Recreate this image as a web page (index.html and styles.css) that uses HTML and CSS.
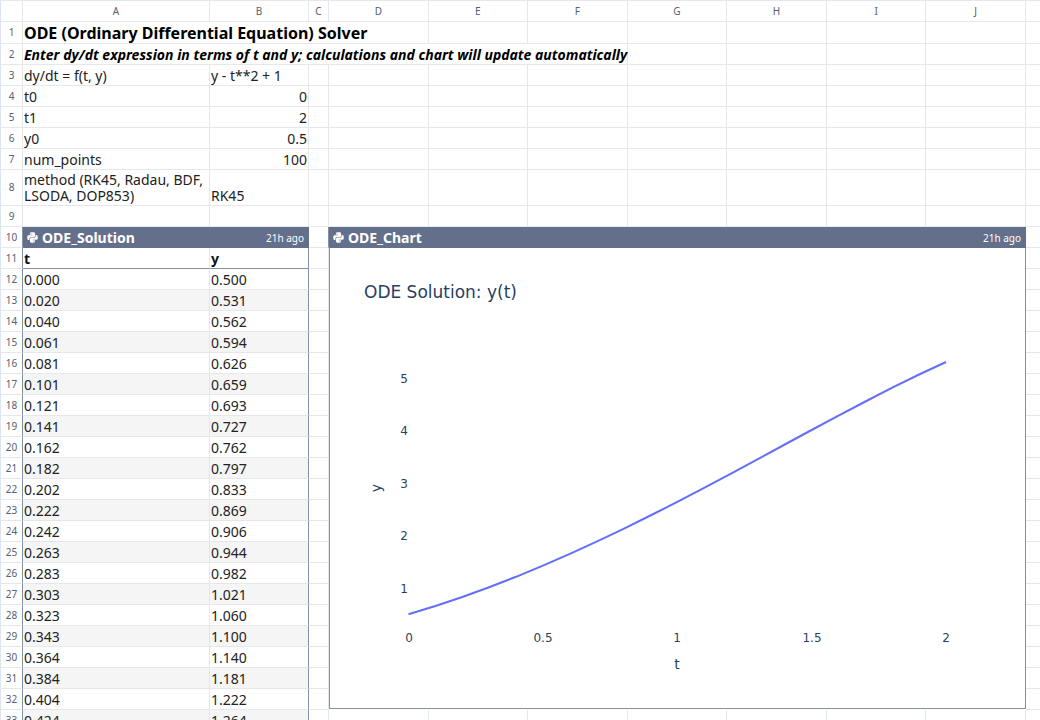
FILE: index.html
```html
<!DOCTYPE html>
<html lang="en">
<head>
<meta charset="utf-8">
<title>ODE (Ordinary Differential Equation) Solver</title>
<link rel="stylesheet" href="styles.css">
</head>
<body>
<svg class="sprite" aria-hidden="true">
  <symbol id="python" viewBox="2 2 20 21">
    <path d="M19.14,7.5A2.86,2.86 0 0,1 22,10.36V14.14A2.86,2.86 0 0,1 19.14,17H12C12,17.39 12.32,17.96 12.71,17.96H17V19.64A2.86,2.86 0 0,1 14.14,22.5H9.86A2.86,2.86 0 0,1 7,19.64V15.89C7,14.31 8.28,13.04 9.86,13.04H15.11C16.69,13.04 17.96,11.76 17.96,10.18V7.5H19.14M14.86,19.29C14.46,19.29 14.14,19.59 14.14,20.18C14.14,20.77 14.46,20.89 14.86,20.89A0.71,0.71 0 0,0 15.57,20.18C15.57,19.59 15.25,19.29 14.86,19.29M4.86,17.5C3.28,17.5 2,16.22 2,14.64V10.86C2,9.28 3.28,8 4.86,8H12C12,7.61 11.68,7.04 11.29,7.04H7V5.36C7,3.78 8.28,2.5 9.86,2.5H14.14C15.72,2.5 17,3.78 17,5.36V9.11C17,10.69 15.72,11.96 14.14,11.96H8.89C7.31,11.96 6.04,13.24 6.04,14.82V17.5H4.86M9.14,5.71C9.54,5.71 9.86,5.41 9.86,4.82C9.86,4.23 9.54,4.11 9.14,4.11A0.71,0.71 0 0,0 8.43,4.82C8.43,5.41 8.75,5.71 9.14,5.71Z"/>
  </symbol>
</svg>
<main class="viewport">
<table class="sheet">
  <colgroup>
    <col class="col-gutter"><col class="col-a"><col class="col-b"><col class="col-c">
    <col span="7"><col class="col-k">
  </colgroup>
  <thead>
    <tr><th></th><th scope="col">A</th><th scope="col">B</th><th scope="col">C</th><th scope="col">D</th><th scope="col">E</th><th scope="col">F</th><th scope="col">G</th><th scope="col">H</th><th scope="col">I</th><th scope="col">J</th><th></th></tr>
  </thead>
  <tbody>
    <tr class="title-row"><th scope="row">1</th><td class="title" colspan="4">ODE (Ordinary Differential Equation) Solver</td><td></td><td></td><td></td><td></td><td></td><td></td><td></td></tr>
    <tr><th scope="row">2</th><td class="subtitle" colspan="6">Enter dy/dt expression in terms of t and y; calculations and chart will update automatically</td><td></td><td></td><td></td><td></td><td></td></tr>
    <tr><th scope="row">3</th><td>dy/dt = f(t, y)</td><td>y - t**2 + 1</td><td></td><td></td><td></td><td></td><td></td><td></td><td></td><td></td><td></td></tr>
    <tr><th scope="row">4</th><td>t0</td><td class="num">0</td><td></td><td></td><td></td><td></td><td></td><td></td><td></td><td></td><td></td></tr>
    <tr><th scope="row">5</th><td>t1</td><td class="num">2</td><td></td><td></td><td></td><td></td><td></td><td></td><td></td><td></td><td></td></tr>
    <tr><th scope="row">6</th><td>y0</td><td class="num">0.5</td><td></td><td></td><td></td><td></td><td></td><td></td><td></td><td></td><td></td></tr>
    <tr><th scope="row">7</th><td>num_points</td><td class="num">100</td><td></td><td></td><td></td><td></td><td></td><td></td><td></td><td></td><td></td></tr>
    <tr class="tall-row"><th scope="row">8</th><td class="wrap">method (RK45, Radau, BDF, LSODA, DOP853)</td><td>RK45</td><td></td><td></td><td></td><td></td><td></td><td></td><td></td><td></td><td></td></tr>
    <tr><th scope="row">9</th><td></td><td></td><td></td><td></td><td></td><td></td><td></td><td></td><td></td><td></td><td></td></tr>
  </tbody>
  <tbody class="solution">
    <tr>
      <th scope="row">10</th>
      <td class="block" colspan="2"><div class="bar"><svg class="icon" aria-hidden="true"><use href="#python"/></svg><strong>ODE_Solution</strong><span class="ago">21h ago</span></div></td>
      <td></td>
      <td class="block" colspan="7" rowspan="23">
        <div class="bar"><svg class="icon" aria-hidden="true"><use href="#python"/></svg><strong>ODE_Chart</strong><span class="ago">21h ago</span></div>
        <svg class="chart" viewBox="0 0 695 460" role="img" aria-label="ODE Solution: y(t)">
          <text class="chart-title" x="34" y="50">ODE Solution: y(t)</text>
          <g class="ticks-y">
            <text x="78" y="135">5</text><text x="78" y="187">4</text><text x="78" y="240">3</text><text x="78" y="292">2</text><text x="78" y="345">1</text>
          </g>
          <g class="ticks-x">
            <text x="79" y="394">0</text><text x="213" y="394">0.5</text><text x="347" y="394">1</text><text x="482" y="394">1.5</text><text x="616" y="394">2</text>
          </g>
          <text class="axis-name" x="347" y="421">t</text>
          <text class="axis-name" transform="translate(51 240) rotate(-90)">y</text>
          <polyline class="curve" points="78.5,366.3 105.4,358 132.3,349 159.1,339.2 186,328.8 212.9,317.7 239.8,305.9 266.6,293.6 293.5,280.8 320.4,267.5 347.3,253.9 374.1,239.8 401,225.6 427.9,211.1 454.8,196.5 481.6,182 508.5,167.6 535.4,153.5 562.3,139.7 589.1,126.5 616,114"/>
        </svg>
      </td>
      <td></td>
    </tr>
    <tr class="names"><th scope="row">11</th><td>t</td><td>y</td><td></td><td></td></tr>
    <tr><th scope="row">12</th><td>0.000</td><td>0.500</td><td></td><td></td></tr>
    <tr><th scope="row">13</th><td>0.020</td><td>0.531</td><td></td><td></td></tr>
    <tr><th scope="row">14</th><td>0.040</td><td>0.562</td><td></td><td></td></tr>
    <tr><th scope="row">15</th><td>0.061</td><td>0.594</td><td></td><td></td></tr>
    <tr><th scope="row">16</th><td>0.081</td><td>0.626</td><td></td><td></td></tr>
    <tr><th scope="row">17</th><td>0.101</td><td>0.659</td><td></td><td></td></tr>
    <tr><th scope="row">18</th><td>0.121</td><td>0.693</td><td></td><td></td></tr>
    <tr><th scope="row">19</th><td>0.141</td><td>0.727</td><td></td><td></td></tr>
    <tr><th scope="row">20</th><td>0.162</td><td>0.762</td><td></td><td></td></tr>
    <tr><th scope="row">21</th><td>0.182</td><td>0.797</td><td></td><td></td></tr>
    <tr><th scope="row">22</th><td>0.202</td><td>0.833</td><td></td><td></td></tr>
    <tr><th scope="row">23</th><td>0.222</td><td>0.869</td><td></td><td></td></tr>
    <tr><th scope="row">24</th><td>0.242</td><td>0.906</td><td></td><td></td></tr>
    <tr><th scope="row">25</th><td>0.263</td><td>0.944</td><td></td><td></td></tr>
    <tr><th scope="row">26</th><td>0.283</td><td>0.982</td><td></td><td></td></tr>
    <tr><th scope="row">27</th><td>0.303</td><td>1.021</td><td></td><td></td></tr>
    <tr><th scope="row">28</th><td>0.323</td><td>1.060</td><td></td><td></td></tr>
    <tr><th scope="row">29</th><td>0.343</td><td>1.100</td><td></td><td></td></tr>
    <tr><th scope="row">30</th><td>0.364</td><td>1.140</td><td></td><td></td></tr>
    <tr><th scope="row">31</th><td>0.384</td><td>1.181</td><td></td><td></td></tr>
    <tr><th scope="row">32</th><td>0.404</td><td>1.222</td><td></td><td></td></tr>
    <tr><th scope="row">33</th><td>0.424</td><td>1.264</td><td></td><td></td><td></td><td></td><td></td><td></td><td></td><td></td><td></td></tr>
  </tbody>
</table>
</main>
</body>
</html>
```
FILE: styles.css
```css
:root {
  --line: #e5e7ea;
  --slate: #64708b;
  --edge: #8491a5;
  --label: #566070;
}

* { box-sizing: border-box; }

body {
  margin: 0;
  background: #fff;
  color: #222;
  font: 14px/16px "Noto Sans", "Open Sans", sans-serif;
}

.sprite { display: none; }

.viewport {
  height: 100vh;
  overflow: hidden;
}

.sheet {
  width: 100%;
  min-width: 800px;
  table-layout: fixed;
  border-collapse: separate;
  border-spacing: 0;
}

.col-gutter { width: 23px; }
.col-a { width: 187px; }
.col-b { width: 99px; }
.col-c { width: 20px; }
.col-k { width: 14px; }

.sheet tr { height: 21px; }
.sheet thead tr,
.sheet .title-row { height: 22px; }
.sheet .tall-row { height: 36px; }

.sheet th,
.sheet td {
  padding: 0 1px;
  border-right: 1px solid var(--line);
  border-bottom: 1px solid var(--line);
  white-space: nowrap;
}

.sheet td {
  vertical-align: bottom;
  padding-bottom: 1px;
}

.sheet th {
  padding-bottom: 1px;
  color: var(--label);
  font-size: 10px;
  line-height: 14px;
  font-weight: 400;
  text-align: center;
  vertical-align: middle;
}

.sheet thead th { border-top: 1px solid var(--line); }
.sheet th:first-child { border-left: 1px solid #dde5f2; }
.sheet th:last-child,
.sheet td:last-child { border-right: 0; }

.sheet .title {
  padding-bottom: 0;
  color: #000;
  font-size: 16px;
  line-height: 20px;
  font-weight: 700;
}

.sheet .subtitle {
  color: #000;
  font-weight: 700;
  font-style: italic;
}

.sheet .num { text-align: right; }
.sheet .wrap { white-space: normal; }

.solution th:first-child,
.solution td:nth-child(3) { border-right-color: var(--edge); }

.solution tr:nth-child(odd) td:nth-child(-n+3):not(.block) { background: #fff; }
.solution tr:nth-child(even):not(.names) td:nth-child(-n+3) { background: #f5f5f5; }

.solution .names td:nth-child(-n+3) {
  border-bottom-color: var(--edge);
  color: #0b1220;
  font-weight: 700;
}

.sheet .block {
  padding: 0;
  border: 0;
  vertical-align: top;
}

.bar {
  display: flex;
  align-items: center;
  gap: 4px;
  height: 21px;
  padding: 0 5px 0 4px;
  background: var(--slate);
  color: #fff;
}

.icon {
  width: 11px;
  height: 11px;
  fill: #fff;
}

.ago {
  margin-left: auto;
  font-size: 10px;
}

.chart {
  display: block;
  width: 100%;
  border: 1px solid var(--edge);
  border-top: 0;
  background: #fff;
  fill: #2a3f5f;
  font: 12px Verdana, "DejaVu Sans", sans-serif;
}

.chart-title { font-size: 17px; }
.ticks-y { text-anchor: end; }
.ticks-x,
.axis-name { text-anchor: middle; }
.axis-name { font-size: 14px; }

.curve {
  fill: none;
  stroke: #636efa;
  stroke-width: 2;
  stroke-linejoin: round;
}
```
